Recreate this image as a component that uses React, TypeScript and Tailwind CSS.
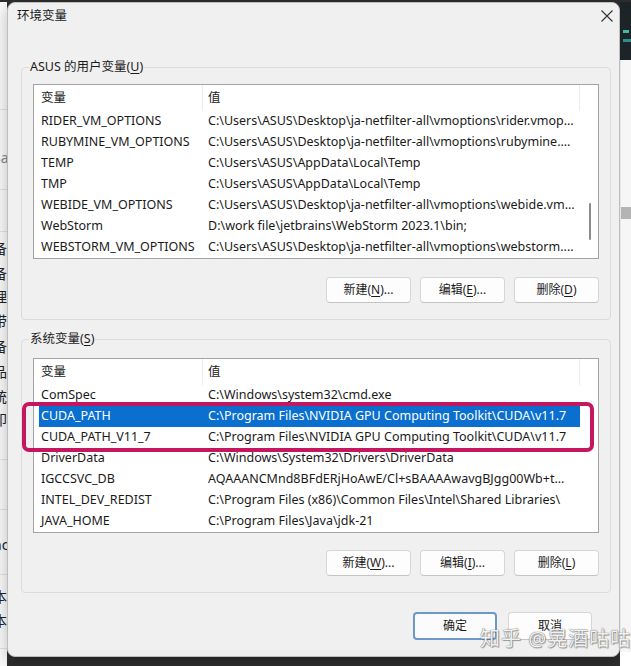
import { ReactNode } from "react";

const userVars: [string, string][] = [
  ["RIDER_VM_OPTIONS", "C:\\Users\\ASUS\\Desktop\\ja-netfilter-all\\vmoptions\\rider.vmop..."],
  ["RUBYMINE_VM_OPTIONS", "C:\\Users\\ASUS\\Desktop\\ja-netfilter-all\\vmoptions\\rubymine.v..."],
  ["TEMP", "C:\\Users\\ASUS\\AppData\\Local\\Temp"],
  ["TMP", "C:\\Users\\ASUS\\AppData\\Local\\Temp"],
  ["WEBIDE_VM_OPTIONS", "C:\\Users\\ASUS\\Desktop\\ja-netfilter-all\\vmoptions\\webide.vm..."],
  ["WebStorm", "D:\\work file\\jetbrains\\WebStorm 2023.1\\bin;"],
  ["WEBSTORM_VM_OPTIONS", "C:\\Users\\ASUS\\Desktop\\ja-netfilter-all\\vmoptions\\webstorm...."],
];

const sysVars: [string, string][] = [
  ["ComSpec", "C:\\Windows\\system32\\cmd.exe"],
  ["CUDA_PATH", "C:\\Program Files\\NVIDIA GPU Computing Toolkit\\CUDA\\v11.7"],
  ["CUDA_PATH_V11_7", "C:\\Program Files\\NVIDIA GPU Computing Toolkit\\CUDA\\v11.7"],
  ["DriverData", "C:\\Windows\\System32\\Drivers\\DriverData"],
  ["IGCCSVC_DB", "AQAAANCMnd8BFdERjHoAwE/Cl+sBAAAAwavgBJgg00Wb+t..."],
  ["INTEL_DEV_REDIST", "C:\\Program Files (x86)\\Common Files\\Intel\\Shared Libraries\\"],
  ["JAVA_HOME", "C:\\Program Files\\Java\\jdk-21"],
];

// bits of the settings window peeking out on the left
const leftBits: { h: number; t?: string; line?: boolean; gray?: boolean }[] = [
  { h: 36 },
  { h: 18, t: "›", gray: true },
  { h: 54, line: true },
  { h: 24 },
  { h: 16, t: "t" },
  { h: 16, t: "Sa", gray: true },
  { h: 24, line: true },
  { h: 42, line: true },
  { h: 4 },
  { h: 25, t: "备" },
  { h: 25, t: "备" },
  { h: 22, t: "理" },
  { h: 25, t: "带" },
  { h: 27, t: "备" },
  { h: 24, t: "品" },
  { h: 25, t: "统" },
  { h: 22, t: "印" },
  { h: 29, line: true },
  { h: 50, line: true },
  { h: 23 },
  { h: 24, t: "nc" },
  { h: 18, line: true },
  { h: 10 },
  { h: 24, t: "本" },
  { h: 24, t: "本" },
  { h: 16, line: true },
];

const Btn = ({ children, w = "w-[85px]", h = "h-[26px]", primary }: { children: ReactNode; w?: string; h?: string; primary?: boolean }) => (
  <div
    className={`${w} ${h} flex items-center justify-center rounded-[4px] text-[12px] text-[#1b1b1b] ${
      primary ? "border-2 border-[#6d98c9] bg-[#fbfbfb]" : "border border-[#d6d6d6] border-b-[#c4c4c4] bg-[#fdfdfd]"
    }`}
  >
    {children}
  </div>
);

const Mn = ({ c }: { c: string }) => <span className="underline underline-offset-2">{c}</span>;

const VarList = ({ rows, selected, thumb, frame }: { rows: [string, string][]; selected?: number; thumb?: boolean; frame?: boolean }) => (
  <div className="relative flex h-[175px] border border-[#a4a4a4] bg-white">
    <div className="flex w-[546px] flex-col">
      <div className="flex h-[26px] shrink-0 items-center text-[12.5px] text-[#222]">
        <div className="w-[168px] pl-[7px]">变量</div>
        <div className="h-full w-px bg-[#ececec]" />
        <div className="flex-1 pl-[5px]">值</div>
        <div className="h-full w-px bg-[#ececec]" />
      </div>
      <div className="flex flex-col pl-[5px]">
        {rows.map(([k, v], i) => (
          <div
            key={k}
            className={`flex h-[21px] shrink-0 items-center whitespace-nowrap text-[12.5px] ${
              i === selected ? "bg-[#0a6fcf] text-white" : "text-[#1a1a1a]"
            }`}
          >
            <div className="w-[167px] overflow-hidden pl-[2px]">{k}</div>
            <div className="min-w-0 flex-1 truncate pl-[2px] pr-[4px]">{v}</div>
          </div>
        ))}
      </div>
    </div>
    <div className="flex w-[18px] flex-col pl-[9px] pt-[118px]">
      {thumb && <div className="h-[37px] w-[2px] rounded-full bg-[#8c8c8c]" />}
    </div>
    {frame && (
      <div className="absolute left-[-12px] top-[43px] h-[50px] w-[572px] rounded-[7px] border-[4px] border-[#c5175f]" />
    )}
  </div>
);

const Group = ({ label, children, className = "" }: { label: ReactNode; children: ReactNode; className?: string }) => (
  <fieldset className={`rounded-[4px] border border-[#dcdcdc] px-[11px] pb-[16px] ${className}`}>
    <legend className="-ml-[4px] px-[1px] text-[12.5px] leading-[18px] text-[#1b1b1b]">{label}</legend>
    {children}
  </fieldset>
);

export default function App() {
  return (
    <div className="relative h-[666px] w-[631px] overflow-hidden bg-[#2e2e2e] font-['Noto_Sans','Noto_Sans_CJK_SC',sans-serif]">
      <div className="mt-[2px] flex h-[664px]">
        {/* left peek of the window behind */}
        <div className="flex w-[7px] flex-col overflow-hidden bg-[#fafafa]">
          {leftBits.map((b, i) => (
            <div key={i} className={`flex shrink-0 items-center ${b.line ? "border-b border-[#e3e3e3]" : ""}`} style={{ height: b.h }}>
              {b.t && (
                <span className={`-ml-[7px] text-[14px] leading-none ${b.gray ? "text-[#888]" : "text-[#222]"}`}>{b.t}</span>
              )}
            </div>
          ))}
        </div>

        {/* dialog */}
        <div className="flex h-[655px] w-[613px] flex-col rounded-[8px] border border-[#bdbdbd] bg-[#f0f0f0] shadow-[0_4px_16px_rgba(0,0,0,0.25)]">
          <div className="flex h-[26px] shrink-0 items-center justify-between pl-[9px] pr-[5px]">
            <span className="text-[12.5px] text-[#1a1a1a]">环境变量</span>
            <svg width="14" height="14" viewBox="0 0 14 14" className="text-[#333]">
              <path d="M1.5 1.5 L12.5 12.5 M12.5 1.5 L1.5 12.5" stroke="currentColor" strokeWidth="1.1" fill="none" />
            </svg>
          </div>

          <Group
            className="ml-[13px] mr-[8px] mt-[29px] pt-[8px]"
            label={
              <>
                ASUS 的用户变量(<Mn c="U" />)
              </>
            }
          >
            <VarList rows={userVars} thumb />
            <div className="mt-[18px] flex justify-end gap-[9px]">
              <Btn>
                新建(<Mn c="N" />)...
              </Btn>
              <Btn>
                编辑(<Mn c="E" />)...
              </Btn>
              <Btn>
                删除(<Mn c="D" />)
              </Btn>
            </div>
          </Group>

          <Group
            className="ml-[13px] mr-[8px] mt-[10px] pt-[10px]"
            label={
              <>
                系统变量(<Mn c="S" />)
              </>
            }
          >
            <VarList rows={sysVars} selected={1} frame />
            <div className="mt-[17px] flex justify-end gap-[9px]">
              <Btn>
                新建(<Mn c="W" />)...
              </Btn>
              <Btn>
                编辑(<Mn c="I" />)...
              </Btn>
              <Btn>
                删除(<Mn c="L" />)
              </Btn>
            </div>
          </Group>

          <div className="mr-[27px] mt-[19px] flex justify-end gap-[11px]">
            <Btn w="w-[84px]" h="h-[28px]" primary>
              确定
            </Btn>
            <Btn w="w-[84px]" h="h-[28px]">
              取消
            </Btn>
          </div>
        </div>

        {/* right peek */}
        <div className="flex flex-1 flex-col">
          <div className="flex h-[58px] flex-col gap-[6px] bg-[#1d2428] pl-[3px] pt-[28px]">
            <div className="h-[3px] w-[6px] bg-[#3fb8a8]" />
            <div className="h-[3px] w-[8px] bg-[#2f8f86]" />
          </div>
          <div className="flex flex-1 flex-col border-l border-[#e6e6e6] bg-[#f6f6f6] pt-[147px]">
            <div className="h-[12px] w-full bg-[#b4b4b4]" />
          </div>
          <div className="h-[14px] bg-white" />
        </div>
      </div>

      {/* watermark */}
      <div className="absolute left-[480px] top-[624px] whitespace-nowrap text-[20px] tracking-[1px] text-white/90 [text-shadow:0_0_1px_#777,0_0_1px_#777,1px_1px_1px_rgba(0,0,0,0.35)]">
        知乎 @晃酒咕咕
      </div>
    </div>
  );
}
